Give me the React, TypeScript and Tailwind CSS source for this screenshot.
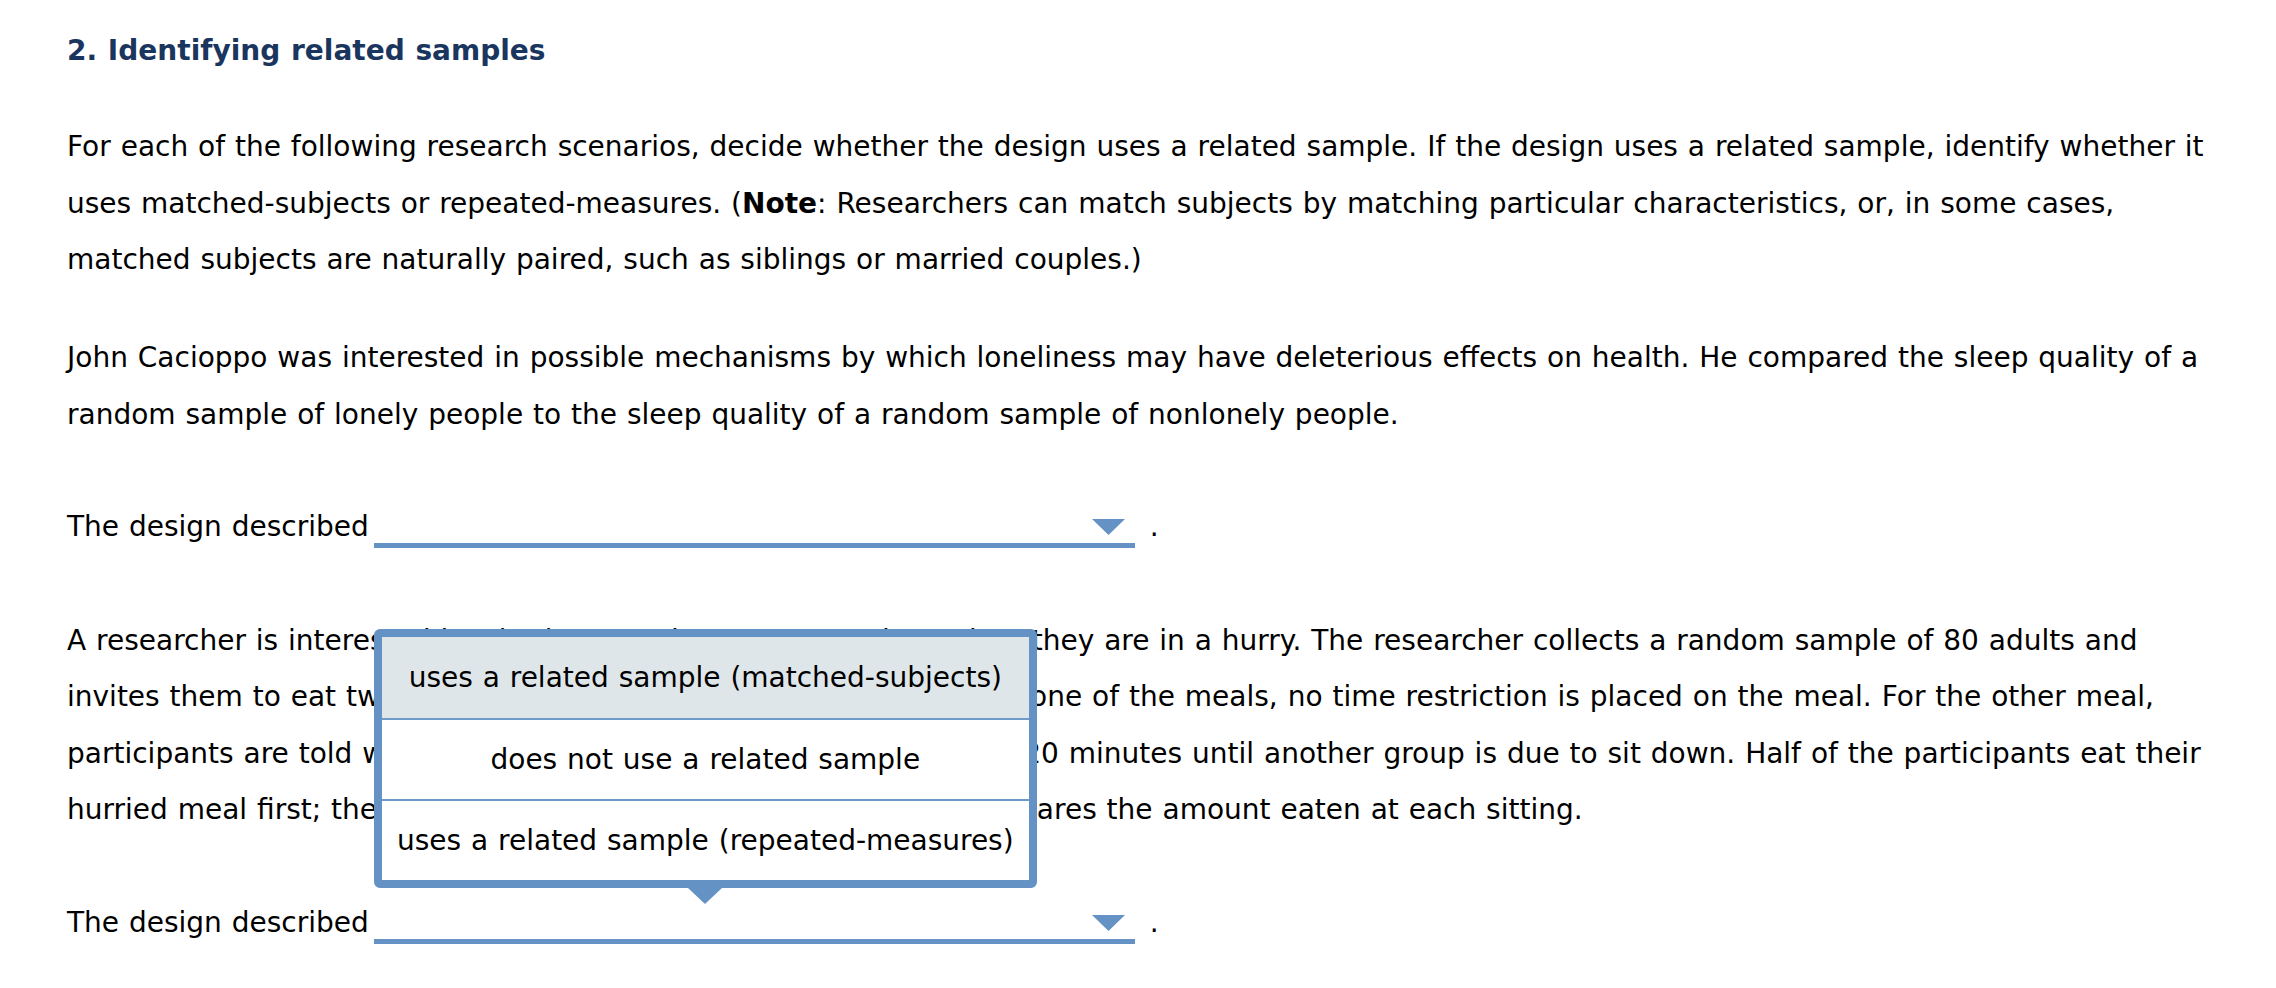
import type { ReactNode } from 'react';

const blue = '#6592c4';

const intro = [
  'For each of the following research scenarios, decide whether the design uses a related sample. If the design uses a related sample, identify whether it',
  null,
  'matched subjects are naturally paired, such as siblings or married couples.)',
];

const loneliness = [
  'John Cacioppo was interested in possible mechanisms by which loneliness may have deleterious effects on health. He compared the sleep quality of a',
  'random sample of lonely people to the sleep quality of a random sample of nonlonely people.',
];

const hurried = [
  'A researcher is interested in whether people eat more or less when they are in a hurry. The researcher collects a random sample of 80 adults and',
  'invites them to eat two meals at a nice restaurant on two days. On one of the meals, no time restriction is placed on the meal. For the other meal,',
  'participants are told when they are seated that they will have only 20 minutes until another group is due to sit down. Half of the participants eat their',
  'hurried meal first; the rest have theirs second. The researcher compares the amount eaten at each sitting.',
];

const choices = [
  'uses a related sample (matched-subjects)',
  'does not use a related sample',
  'uses a related sample (repeated-measures)',
];

function Lines({ lines, className }: { lines: ReactNode[]; className: string }) {
  return (
    <div className={className}>
      {lines.map((line, i) => (
        <span key={i} className="block whitespace-nowrap leading-[56.5px]">
          {line}
        </span>
      ))}
    </div>
  );
}

function Caret() {
  return (
    <svg width="33" height="16" viewBox="0 0 33 16">
      <path d="M0 0H33L16.5 16Z" fill={blue} />
    </svg>
  );
}

function ChoiceMenu() {
  return (
    <div className="absolute bottom-[51px] left-0 w-[663px] rounded-[6px] border-[8px] border-[#6592c4] bg-white">
      {choices.map((choice, i) => (
        <div
          key={choice}
          className={
            i === 0
              ? 'flex h-[81px] items-center justify-center bg-[#dfe6e9] whitespace-nowrap'
              : 'flex h-[81px] items-center justify-center border-t-2 border-[#6f9bcb] whitespace-nowrap'
          }
        >
          {choice}
        </div>
      ))}
      <svg
        className="absolute left-1/2 top-[calc(100%+8px)] -translate-x-1/2"
        width="34"
        height="16"
        viewBox="0 0 34 16"
      >
        <path d="M0 0H34L17 16Z" fill={blue} />
      </svg>
    </div>
  );
}

function DesignRow({ open, className }: { open?: boolean; className: string }) {
  return (
    <div className={`flex items-end ${className}`}>
      <span className="leading-[56.5px]">The design described</span>
      <div className="relative mb-[7.5px] ml-[5px] w-[761px] border-b-[5px] border-[#6592c4]">
        <div className="flex h-[40px] items-end justify-end pr-[10px] pb-[8px]">
          <Caret />
        </div>
        {open && <ChoiceMenu />}
      </div>
      <span className="ml-[15px] leading-[56.5px]">.</span>
    </div>
  );
}

export default function App() {
  const introLines: ReactNode[] = intro.map((line) =>
    line ?? (
      <>
        uses matched-subjects or repeated-measures. (<b>Note</b>: Researchers can match subjects by matching particular
        characteristics, or, in some cases,
      </>
    ),
  );

  return (
    <div className="min-h-screen bg-white pl-[67px] pt-[34px] font-['DejaVu_Sans',sans-serif] text-[28px] text-black [word-spacing:1px]">
      <h2 className="text-[28px] font-bold leading-[34px] text-[#1a365f]">2. Identifying related samples</h2>

      <Lines lines={introLines} className="mt-[51px]" />
      <Lines lines={loneliness} className="mt-[41.5px]" />

      <DesignRow className="mt-[56px]" />

      <Lines lines={hurried} className="mt-[57px]" />

      <DesignRow open className="mt-[56.5px]" />
    </div>
  );
}
